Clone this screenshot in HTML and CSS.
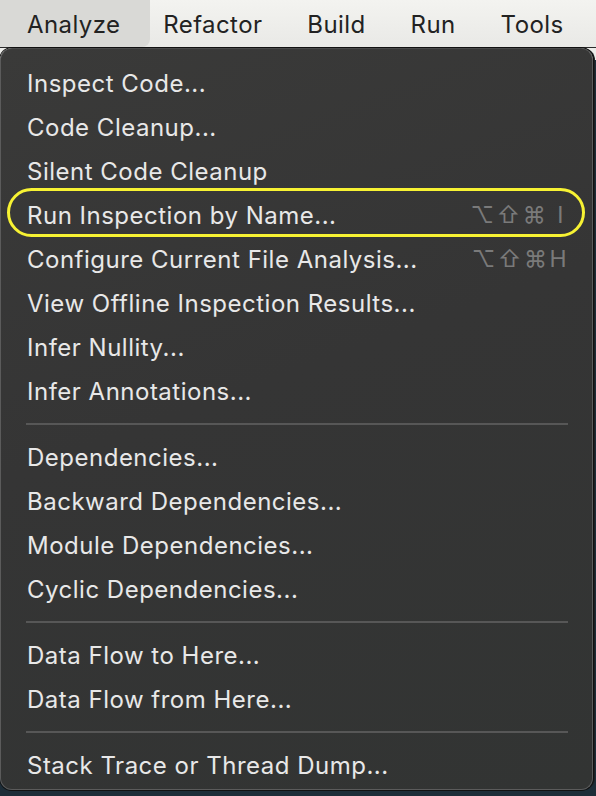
FILE: index.html
```html
<!DOCTYPE html>
<html>
<head>
<meta charset="utf-8">
<link rel="stylesheet" href="styles.css">
</head>
<body>
<div class="menubar">
  <div class="mb-item active">Analyze</div>
  <div class="mb-item">Refactor</div>
  <div class="mb-item">Build</div>
  <div class="mb-item">Run</div>
  <div class="mb-item">Tools</div>
</div>
<div class="menu">
  <div class="item">Inspect Code...</div>
  <div class="item">Code Cleanup...</div>
  <div class="item">Silent Code Cleanup</div>
  <div class="item marked"><span>Run Inspection by Name...</span><span class="sc">⌥⇧⌘ I</span></div>
  <div class="item"><span>Configure Current File Analysis...</span><span class="sc">⌥⇧⌘H</span></div>
  <div class="item">View Offline Inspection Results...</div>
  <div class="item">Infer Nullity...</div>
  <div class="item">Infer Annotations...</div>
  <div class="sep"></div>
  <div class="item">Dependencies...</div>
  <div class="item">Backward Dependencies...</div>
  <div class="item">Module Dependencies...</div>
  <div class="item">Cyclic Dependencies...</div>
  <div class="sep"></div>
  <div class="item">Data Flow to Here...</div>
  <div class="item">Data Flow from Here...</div>
  <div class="sep"></div>
  <div class="item">Stack Trace or Thread Dump...</div>
</div>
</body>
</html>
```
FILE: styles.css
```css
html, body {
  margin: 0;
  padding: 0;
}
body {
  width: 596px;
  height: 796px;
  overflow: hidden;
  background: linear-gradient(to bottom, #ecece9 0, #ecece9 60px, #1d2d38 60px);
  font-family: Inter, "Noto Sans", sans-serif;
}
.menubar {
  height: 47px;
  display: flex;
  align-items: stretch;
  background: linear-gradient(#f3f3f0, #e9e9e6);
  border-bottom: 1px solid #2a2a2a;
}
.mb-item {
  display: flex;
  align-items: center;
  padding: 1px 22.5px 0 22.5px;
  font-size: 24px;
  color: #222;
  letter-spacing: 0.4px;
}
.mb-item.active {
  padding-left: 27px;
  padding-right: 30px;
  margin-right: -9.5px;
  background: #d9d9d6;
  border-bottom-right-radius: 8px;
}
.menu {
  width: 593px;
  height: 742px;
  box-sizing: border-box;
  padding: 12px 0 0 0;
  background: linear-gradient(160deg, #3a3a39 0%, #353535 45%, #323433 100%);
  border: 1px solid #5b5b5b;
  border-top-color: #4a4a4a;
  border-radius: 12px;
  box-shadow: 0 0 0 1px #111, 2px 0 0 0 #1b1f22;
  color: #e8e8e8;
}
.item {
  height: 44px;
  display: flex;
  align-items: center;
  justify-content: space-between;
  padding: 0 23px 0 26px;
  font-size: 24px;
  letter-spacing: 0.5px;
}
.sc {
  color: #7a7a7a;
  font-size: 23px;
  letter-spacing: 2.5px;
}
.marked {
  box-sizing: border-box;
  margin: -5px 7px 0 6px;
  padding: 5px 16px 0 17px;
  border: 3px solid #f7f233;
  border-radius: 25px;
  height: 49px;
}
.sep {
  height: 2px;
  margin: 10px 24px 10px 25px;
  background: #575757;
}
```
